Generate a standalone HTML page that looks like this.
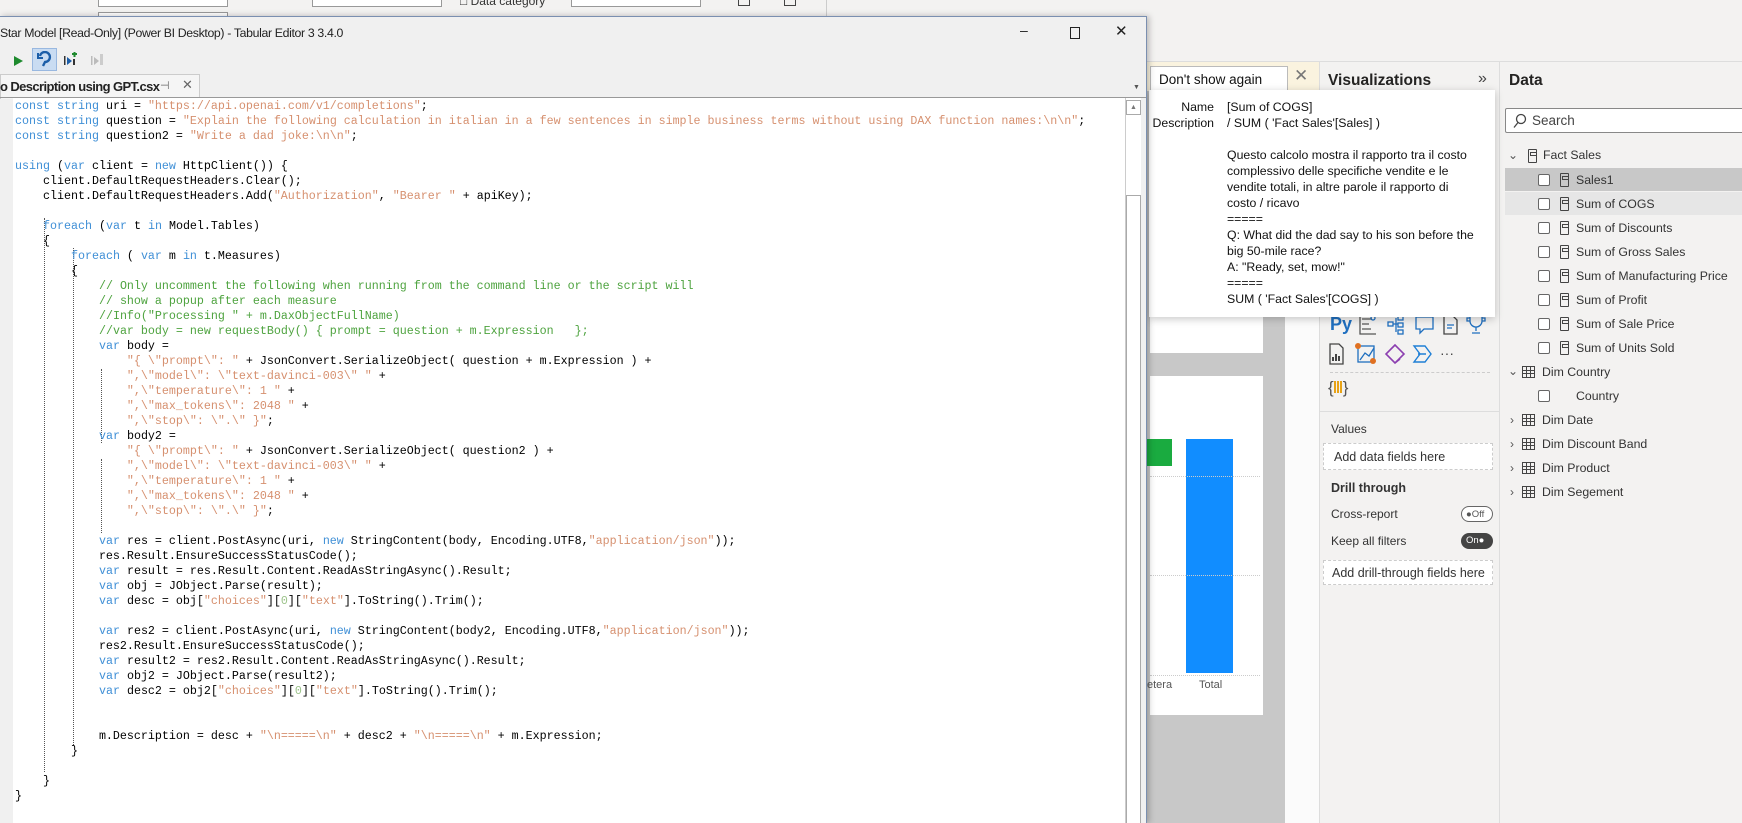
<!DOCTYPE html>
<html><head><meta charset="utf-8"><style>
*{margin:0;padding:0;box-sizing:border-box}
body{width:1742px;height:823px;overflow:hidden;background:#f3f2f1;font-family:"Liberation Sans",sans-serif;position:relative}
.a{position:absolute}
pre{font-family:"Liberation Mono",monospace;font-size:11.67px;line-height:15px;color:#000}
.k{color:#3f8fd6}.s{color:#d6906f}.c{color:#4ea33f}.n{color:#9cc38a}
.tt{font-size:12.3px;color:#111;line-height:16px}
.cb{position:absolute;width:12px;height:12px;border:1px solid #666;border-radius:2px;background:#fff}
.calc{position:absolute;width:9px;height:14px;border:1.3px solid #444;border-radius:1px}
.calc:after{content:"";position:absolute;left:1px;top:2px;width:5px;height:2px;border:1px solid #444}
.tbl{position:absolute;width:13px;height:12px;border:1.3px solid #444;background:
linear-gradient(#444,#444) 0 3px/100% 1px no-repeat,linear-gradient(#444,#444) 0 6px/100% 1px no-repeat,
linear-gradient(#444,#444) 3px 0/1px 100% no-repeat,linear-gradient(#444,#444) 7px 0/1px 100% no-repeat}
.chev{position:absolute;font-size:12px;color:#555}
</style></head><body>

<div class="a" style="left:0;top:0;width:1742px;height:62px;background:#f3f2f1;border-bottom:1px solid #ddd"></div>
<div class="a" style="left:98px;top:-2px;width:130px;height:9px;border:1px solid #999;background:#fff"></div>
<div class="a" style="left:98px;top:12px;width:130px;height:8px;border:1px solid #999;background:#fff"></div>
<div class="a" style="left:312px;top:-2px;width:130px;height:9px;border:1px solid #999;background:#fff"></div>
<div class="a" style="left:460px;top:-6px;font-size:12px;color:#333">&#9633; Data category</div>
<div class="a" style="left:571px;top:-2px;width:130px;height:9px;border:1px solid #999;background:#fff"></div>
<div class="a" style="left:826px;top:0;width:1px;height:17px;background:#ccc"></div>
<div class="a" style="left:738px;top:0;width:12px;height:6px;border:1.5px solid #444;border-top:none"></div>
<div class="a" style="left:784px;top:0;width:12px;height:6px;border:1.5px solid #444;border-top:none"></div>
<div class="a" style="left:1146px;top:62px;width:596px;height:761px;background:#f3f2f1"></div>

<div class="a" style="left:1146px;top:62px;width:174px;height:29px;background:#faf3df"></div>
<div class="a" style="left:1150px;top:66px;width:138px;height:26px;background:#fff;border:1px solid #bbb;border-bottom:none;font-size:13.5px;padding:5px 0 0 8px;color:#111">Don't show again</div>
<div class="a" style="left:1294px;top:66px;font-size:17px;color:#777">&#x2715;</div>
<div class="a" style="left:1146px;top:91px;width:174px;height:732px;background:#c8c8c8"></div>
<div class="a" style="left:1285px;top:91px;width:34px;height:732px;background:#fbfbfb"></div>
<div class="a" style="left:1150px;top:91px;width:113px;height:262px;background:#fff"></div>
<div class="a" style="left:1150px;top:376px;width:113px;height:339px;background:#fff"></div>
<div class="a" style="left:1147px;top:439px;width:25px;height:27px;background:#1aab40"></div>
<div class="a" style="left:1186px;top:439px;width:47px;height:234px;background:#118dff"></div>
<div class="a" style="left:1150px;top:476px;width:110px;border-top:1px dotted #ccc"></div>
<div class="a" style="left:1150px;top:575px;width:110px;border-top:1px dotted #ccc"></div>
<div class="a" style="left:1150px;top:675px;width:110px;border-top:1px dotted #ccc"></div>
<div class="a" style="left:1147px;top:679px;font-size:11px;color:#555">etera</div>
<div class="a" style="left:1199px;top:679px;font-size:11px;color:#555">Total</div>

<div class="a" style="left:1319px;top:62px;width:1px;height:761px;background:#ddd"></div>
<div class="a" style="left:1499px;top:62px;width:1px;height:761px;background:#ddd"></div>
<div class="a" style="left:1328px;top:72px;font-size:15.5px;font-weight:bold;color:#252423">Visualizations</div>
<div class="a" style="left:1478px;top:70px;font-size:16px;color:#444">&#187;</div>
<div class="a" style="left:1330px;top:314px;font-size:18px;font-weight:bold;color:#1f6fbf">Py</div>
<svg class="a" style="left:1358px;top:314px" width="130" height="24" fill="none" stroke-width="1.3">
<g stroke="#555"><path d="M2 2v18h16M4 5h10M4 10h7M4 15h9"/></g><circle cx="15" cy="4" r="2" stroke="#1f6fbf"/>
<g stroke="#1f6fbf"><rect x="30" y="8" width="5" height="4"/><rect x="40" y="2" width="5" height="4"/><rect x="40" y="9" width="5" height="4"/><rect x="40" y="16" width="5" height="4"/><path d="M35 10h5M38 4v14"/>
<path d="M58 3h17v12h-9l-4 4v-4h-4z"/></g>
<path d="M86 2h9l4 4v14h-13z" stroke="#444"/><path d="M89 11h7M89 14h5" stroke="#1f6fbf"/>
<path d="M112 2h12v5a6 6 0 0 1-12 0zM118 13v4M114 19h8M112 4h-3v3h3M124 4h3v3h-3" stroke="#1f6fbf"/>
</svg>
<svg class="a" style="left:1328px;top:342px" width="150" height="24" fill="none" stroke-width="1.3">
<path d="M2 2h9l4 4v16h-13z" stroke="#444"/><path d="M5 19v-4M8 19v-7M11 19v-5" stroke="#444" stroke-width="2"/>
<rect x="30" y="4" width="16" height="16" stroke="#1f6fbf"/><path d="M32 18l5-7 4 3 5-8" stroke="#1f6fbf"/><circle cx="30" cy="4" r="3" fill="#e07020" stroke="none"/><circle cx="45" cy="19" r="3" fill="#e07020" stroke="none"/>
<path d="M67 3l9 9-9 9-9-9zM62 8l5-5M72 17l-5 4" stroke="#8c3fb0" stroke-width="1.6"/>
<path d="M86 4h11l6 8-6 8h-11l6-8z M90 12h8" stroke="#1f7fd6" stroke-width="1.4"/>
<text x="112" y="16" font-size="14" fill="#444" stroke="none" font-family="Liberation Sans">···</text>
</svg>
<div class="a" style="left:1330px;top:372px;width:160px;border-top:1px dashed #ccc"></div>
<div class="a" style="left:1328px;top:378px;font-size:17px;color:#555">{<span style="display:inline-block;width:9px;height:12px;background:linear-gradient(90deg,#e8a317 0 2px,transparent 2px 3px,#e8a317 3px 5px,transparent 5px 6px,#e8a317 6px 8px,transparent 8px)"></span>}</div>
<div class="a" style="left:1320px;top:411px;width:179px;height:1px;background:#ddd"></div>
<div class="a" style="left:1331px;top:422px;font-size:12px;color:#333">Values</div>
<div class="a" style="left:1323px;top:443px;width:170px;height:27px;border:1px dashed #ccc;background:#fff;font-size:12.5px;padding:6px 0 0 10px;color:#333">Add data fields here</div>
<div class="a" style="left:1331px;top:481px;font-size:12.5px;font-weight:bold;color:#333">Drill through</div>
<div class="a" style="left:1331px;top:507px;font-size:12px;color:#333">Cross-report</div>
<div class="a" style="left:1461px;top:506px;width:32px;height:16px;border:1px solid #666;border-radius:8px;background:#fff;font-size:9.5px;color:#555;padding:2px 0 0 4px">&#9679;Off</div>
<div class="a" style="left:1331px;top:534px;font-size:12px;color:#333">Keep all filters</div>
<div class="a" style="left:1461px;top:533px;width:32px;height:16px;border-radius:8px;background:#444;font-size:9.5px;color:#fff;padding:2px 0 0 5px">On&#9679;</div>
<div class="a" style="left:1323px;top:560px;width:170px;height:25px;border:1px dashed #ccc;background:#fff;font-size:12.5px;padding:5px 0 0 8px;color:#333">Add drill-through fields here</div>

<div class="a" style="left:1509px;top:72px;font-size:15.5px;font-weight:bold;color:#252423">Data</div>
<div class="a" style="left:1505px;top:108px;width:240px;height:25px;border:1px solid #888;background:#fff;border-radius:2px"></div>
<svg class="a" style="left:1513px;top:113px" width="14" height="16" fill="none" stroke="#444" stroke-width="1.3"><circle cx="8" cy="6" r="4.5"/><path d="M5 9.5l-4 5"/></svg>
<div class="a" style="left:1532px;top:113px;font-size:13.5px;color:#444">Search</div>
<div class="a" style="left:1505px;top:168px;width:237px;height:23px;background:#c8c8c8"></div>
<div class="a" style="left:1505px;top:192px;width:237px;height:23px;background:#e6e6e6"></div>
<div class="chev" style="left:1508px;top:148px">&#8964;</div>
<div class="calc" style="left:1528px;top:149px"></div>
<div class="a" style="left:1543px;top:148px;font-size:12.3px;color:#333">Fact Sales</div>
<div class="cb" style="left:1538px;top:174px"></div><div class="calc" style="left:1560px;top:173px"></div><div class="a" style="left:1576px;top:173px;font-size:12.3px;color:#333">Sales1</div>
<div class="cb" style="left:1538px;top:198px"></div><div class="calc" style="left:1560px;top:197px"></div><div class="a" style="left:1576px;top:197px;font-size:12.3px;color:#333">Sum of COGS</div>
<div class="cb" style="left:1538px;top:222px"></div><div class="calc" style="left:1560px;top:221px"></div><div class="a" style="left:1576px;top:221px;font-size:12.3px;color:#333">Sum of Discounts</div>
<div class="cb" style="left:1538px;top:246px"></div><div class="calc" style="left:1560px;top:245px"></div><div class="a" style="left:1576px;top:245px;font-size:12.3px;color:#333">Sum of Gross Sales</div>
<div class="cb" style="left:1538px;top:270px"></div><div class="calc" style="left:1560px;top:269px"></div><div class="a" style="left:1576px;top:269px;font-size:12.3px;color:#333">Sum of Manufacturing Price</div>
<div class="cb" style="left:1538px;top:294px"></div><div class="calc" style="left:1560px;top:293px"></div><div class="a" style="left:1576px;top:293px;font-size:12.3px;color:#333">Sum of Profit</div>
<div class="cb" style="left:1538px;top:318px"></div><div class="calc" style="left:1560px;top:317px"></div><div class="a" style="left:1576px;top:317px;font-size:12.3px;color:#333">Sum of Sale Price</div>
<div class="cb" style="left:1538px;top:342px"></div><div class="calc" style="left:1560px;top:341px"></div><div class="a" style="left:1576px;top:341px;font-size:12.3px;color:#333">Sum of Units Sold</div>
<div class="chev" style="left:1508px;top:364px">&#8964;</div><div class="tbl" style="left:1522px;top:366px"></div><div class="a" style="left:1542px;top:365px;font-size:12.3px;color:#333">Dim Country</div>
<div class="cb" style="left:1538px;top:390px"></div><div class="a" style="left:1576px;top:389px;font-size:12.3px;color:#333">Country</div>
<div class="chev" style="left:1510px;top:413px">&#8250;</div><div class="tbl" style="left:1522px;top:414px"></div><div class="a" style="left:1542px;top:413px;font-size:12.3px;color:#333">Dim Date</div>
<div class="chev" style="left:1510px;top:437px">&#8250;</div><div class="tbl" style="left:1522px;top:438px"></div><div class="a" style="left:1542px;top:437px;font-size:12.3px;color:#333">Dim Discount Band</div>
<div class="chev" style="left:1510px;top:461px">&#8250;</div><div class="tbl" style="left:1522px;top:462px"></div><div class="a" style="left:1542px;top:461px;font-size:12.3px;color:#333">Dim Product</div>
<div class="chev" style="left:1510px;top:485px">&#8250;</div><div class="tbl" style="left:1522px;top:486px"></div><div class="a" style="left:1542px;top:485px;font-size:12.3px;color:#333">Dim Segement</div>

<div class="a" style="left:1149px;top:90px;width:346px;height:227px;background:#fff;box-shadow:0 2px 8px rgba(0,0,0,.22)"></div>
<div class="a tt" style="left:1150px;top:99px;width:64px;text-align:right">Name<br>Description</div>
<div class="a tt" style="left:1227px;top:99px;width:250px">[Sum of COGS]<br>/ SUM ( 'Fact Sales'[Sales] )<br><br>Questo calcolo mostra il rapporto tra il costo complessivo delle specifiche vendite e le vendite totali, in altre parole il rapporto di costo / ricavo<br>=====<br>Q: What did the dad say to his son before the big 50-mile race?<br>A: "Ready, set, mow!"<br>=====<br>SUM ( 'Fact Sales'[COGS] )</div>

<div class="a" style="left:0;top:16px;width:1147px;height:807px;background:#f0f0f0;border-top:1px solid #7a8fb0;border-right:1px solid #7a8fb0;box-shadow:2px 0 6px rgba(0,0,0,.25)"></div>
<div class="a" style="left:0;top:26px;font-size:12.3px;color:#222;letter-spacing:-.35px">Star Model [Read-Only] (Power BI Desktop) - Tabular Editor 3 3.4.0</div>
<div class="a" style="left:1020px;top:22px;font-size:14px;color:#222">&#8211;</div>
<div class="a" style="left:1070px;top:27px;width:10px;height:12px;border:1.2px solid #222"></div>
<div class="a" style="left:1115px;top:22px;font-size:15px;color:#222">&#x2715;</div>
<div class="a" style="left:14px;top:56px;width:0;height:0;border-left:9px solid #1e8a2e;border-top:5.5px solid transparent;border-bottom:5.5px solid transparent"></div>
<div class="a" style="left:32px;top:48px;width:25px;height:23px;background:#c9dcf2;border:1px solid #99b8e0"></div>
<svg class="a" style="left:37px;top:51px" width="16" height="17" fill="none" stroke="#1c5ea8" stroke-width="2.4"><path d="M3 5a5 5 0 1 1 5 6l-2 4"/><path d="M1 2v5h5" stroke-width="2"/></svg>
<svg class="a" style="left:63px;top:52px" width="44" height="16"><rect x="1" y="4" width="1.5" height="9" fill="#333"/><path d="M4 5l5 4-5 4z" fill="#1c5ea8"/><path d="M9 2h5M11.5 0v5" stroke="#1e8a2e" stroke-width="2"/><rect x="10" y="7" width="2" height="6" fill="#333"/>
<rect x="28" y="4" width="1.5" height="9" fill="#bbb"/><path d="M31 5l5 4-5 4z" fill="#bbb"/><rect x="37" y="2" width="3" height="11" fill="#ccc"/></svg>
<div class="a" style="left:0;top:74px;width:200px;height:25px;background:#f5f5f5;border:1px solid #ccc;border-bottom:none"></div>
<div class="a" style="left:0;top:79px;font-size:13px;font-weight:bold;color:#222;letter-spacing:-.6px">o Description using GPT.csx</div>
<div class="a" style="left:160px;top:79px;font-size:11px;color:#666">&#8867;</div>
<div class="a" style="left:182px;top:77px;font-size:13px;color:#666">&#x2715;</div>
<div class="a" style="left:1133px;top:84px;font-size:7px;color:#555">&#9660;</div>
<div class="a" style="left:0;top:97px;width:1146px;height:1px;background:#999"></div>
<div class="a" style="left:13px;top:98px;width:1112px;height:725px;background:#fff"></div>
<div class="a" style="left:1125px;top:98px;width:16px;height:725px;background:#fff;border-left:1px solid #ccc"></div>
<div class="a" style="left:1126px;top:100px;width:15px;height:15px;border:1px solid #aaa;font-size:7px;color:#777;text-align:center;line-height:13px">&#9650;</div>
<div class="a" style="left:1126px;top:195px;width:15px;height:628px;border:1px solid #aaa;border-bottom:none"></div>

<div class="a" style="left:44px;top:218px;height:554px;border-left:1px dotted #555"></div>
<div class="a" style="left:73px;top:248px;height:497px;border-left:1px dotted #555"></div>
<div class="a" style="left:101px;top:369px;height:74px;border-left:1px dotted #555"></div>
<div class="a" style="left:101px;top:459px;height:74px;border-left:1px dotted #555"></div>

<pre class="a" style="left:15px;top:99px;width:1108px;overflow:hidden;white-space:pre"><span class="k">const</span> <span class="k">string</span> uri = <span class="s">"https://api.openai.com/v1/completions"</span>;
<span class="k">const</span> <span class="k">string</span> question = <span class="s">"Explain the following calculation in italian in a few sentences in simple business terms without using DAX function names:\n\n"</span>;
<span class="k">const</span> <span class="k">string</span> question2 = <span class="s">"Write a dad joke:\n\n"</span>;

<span class="k">using</span> (<span class="k">var</span> client = <span class="k">new</span> HttpClient()) {
    client.DefaultRequestHeaders.Clear();
    client.DefaultRequestHeaders.Add(<span class="s">"Authorization"</span>, <span class="s">"Bearer "</span> + apiKey);

    <span class="k">foreach</span> (<span class="k">var</span> t <span class="k">in</span> Model.Tables)
    {
        <span class="k">foreach</span> ( <span class="k">var</span> m <span class="k">in</span> t.Measures)
        {
            <span class="c">// Only uncomment the following when running from the command line or the script will</span>
            <span class="c">// show a popup after each measure</span>
            <span class="c">//Info("Processing " + m.DaxObjectFullName)</span>
            <span class="c">//var body = new requestBody() { prompt = question + m.Expression   };</span>
            <span class="k">var</span> body =
                <span class="s">"{ \"prompt\": "</span> + JsonConvert.SerializeObject( question + m.Expression ) +
                <span class="s">",\"model\": \"text-davinci-003\" "</span> +
                <span class="s">",\"temperature\": 1 "</span> +
                <span class="s">",\"max_tokens\": 2048 "</span> +
                <span class="s">",\"stop\": \".\" }"</span>;
            <span class="k">var</span> body2 =
                <span class="s">"{ \"prompt\": "</span> + JsonConvert.SerializeObject( question2 ) +
                <span class="s">",\"model\": \"text-davinci-003\" "</span> +
                <span class="s">",\"temperature\": 1 "</span> +
                <span class="s">",\"max_tokens\": 2048 "</span> +
                <span class="s">",\"stop\": \".\" }"</span>;

            <span class="k">var</span> res = client.PostAsync(uri, <span class="k">new</span> StringContent(body, Encoding.UTF8,<span class="s">"application/json"</span>));
            res.Result.EnsureSuccessStatusCode();
            <span class="k">var</span> result = res.Result.Content.ReadAsStringAsync().Result;
            <span class="k">var</span> obj = JObject.Parse(result);
            <span class="k">var</span> desc = obj[<span class="s">"choices"</span>][<span class="n">0</span>][<span class="s">"text"</span>].ToString().Trim();

            <span class="k">var</span> res2 = client.PostAsync(uri, <span class="k">new</span> StringContent(body2, Encoding.UTF8,<span class="s">"application/json"</span>));
            res2.Result.EnsureSuccessStatusCode();
            <span class="k">var</span> result2 = res2.Result.Content.ReadAsStringAsync().Result;
            <span class="k">var</span> obj2 = JObject.Parse(result2);
            <span class="k">var</span> desc2 = obj2[<span class="s">"choices"</span>][<span class="n">0</span>][<span class="s">"text"</span>].ToString().Trim();


            m.Description = desc + <span class="s">"\n=====\n"</span> + desc2 + <span class="s">"\n=====\n"</span> + m.Expression;
        }

    }
}</pre>
</body></html>
